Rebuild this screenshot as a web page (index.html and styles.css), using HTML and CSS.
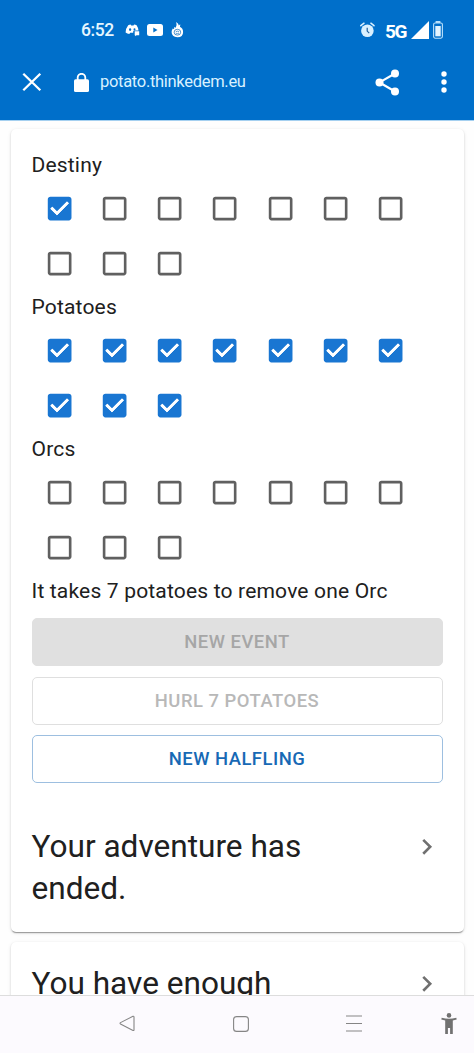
FILE: index.html
```html
<!DOCTYPE html>
<html lang="en">
<head>
<meta charset="utf-8">
<title>Potato</title>
<link rel="stylesheet" href="styles.css">
</head>
<body>
<svg width="0" height="0" class="defs">
  <symbol id="off" viewBox="0 0 24 24"><path fill="#606060" d="M19 5v14H5V5h14m0-2H5c-1.1 0-2 .9-2 2v14c0 1.1.9 2 2 2h14c1.1 0 2-.9 2-2V5c0-1.1-.9-2-2-2z"/></symbol>
  <symbol id="on" viewBox="0 0 24 24"><path fill="#1976d2" d="M19 3H5c-1.11 0-2 .9-2 2v14c0 1.1.89 2 2 2h14c1.11 0 2-.9 2-2V5c0-1.1-.89-2-2-2zm-9 14l-5-5 1.41-1.41L10 14.17l7.59-7.59L19 8l-9 9z"/><path fill="#fff" d="M10 17l-5-5 1.41-1.41L10 14.17l7.59-7.59L19 8z"/></symbol>
  <symbol id="chevron" viewBox="0 0 24 24"><path fill="#707070" d="M10 6L8.59 7.41 13.17 12l-4.58 4.59L10 18l6-6z"/></symbol>
</svg>
<div class="screen">
  <header class="top">
    <div class="status">
      <span class="clock">6:52</span>
      <svg class="discord" width="15" height="13" viewBox="0 0 15 13"><path fill="#fff" d="M3.2 1.2Q4.5.6 5.6.5l.6.9h2.3l.6-.9q1.3.1 2.5.7Q13.3 3.700 13.500 6.500H9.200q-1 0-1 1v1.200H5.200L4.300 10Q2.200 9.900.6 8.500.6 4.400 3.200 1.200z"/><ellipse cx="5.100" cy="5.600" rx="1.100" ry="1.300" fill="#006fca"/><ellipse cx="9.500" cy="5.400" rx="1" ry="1.100" fill="#006fca"/><path fill="#fff" d="M9.700 7.300h4.500v3.900h-2.700L10.200 12.300v-1.100h-.5z"/></svg>
      <svg class="youtube" width="16" height="12" viewBox="0 0 16 12"><rect width="16" height="12" rx="2.500" fill="#fff"/><path d="M6.300 3.500v5l4.200-2.500z" fill="#006fca"/></svg>
      <svg class="flame" width="13" height="16" viewBox="0 0 13 16"><path fill="#fff" d="M5.200 0Q7.800 1.700 7.800 3.600l1.400-1.400q.1 1.700-.3 2.600 3.200 1.500 3.200 5.100 0 5.300-5.700 5.300T.6 10.100q0-2 1.200-3.500l1.300.6.1-2.200 1.500.8Q6.200 3 5.200 0z"/><ellipse cx="6.400" cy="10.200" rx="3.300" ry="2.900" fill="none" stroke="#3a86c4" stroke-width=".9"/><path d="M4.800 9.800q1.600-1.300 3.200 0M4.800 11.200q1.600.9 3.200-.1" fill="none" stroke="#3a86c4" stroke-width=".8"/></svg>
      <svg class="alarm" width="15" height="16" viewBox="0 0 15 16"><circle cx="7.400" cy="8.800" r="6.300" fill="#d9f0ff"/><path d="M.8 3.700L4 1.200M10.900 1.200L14 3.700" stroke="#d9f0ff" stroke-width="1.500" stroke-linecap="round"/><path d="M7.200 5.800v3.300l2 2" fill="none" stroke="#20609e" stroke-width="1.200"/></svg>
      <span class="net">5G</span>
      <svg class="signal" width="18" height="18" viewBox="0 0 18 18"><path fill="#fff" d="M18 0v18H0z"/></svg>
      <svg class="battery" width="10" height="18" viewBox="0 0 10 18"><path fill="#b9e0fa" d="M2.600 0h4.800v2H2.600z"/><rect x=".6" y="2" width="8.800" height="15.200" rx="1.600" fill="none" stroke="#b9e0fa" stroke-width="1.100"/><path fill="#e4f4ff" d="M2.300 5h5.400v10.300H2.300z"/></svg>
    </div>
    <div class="bar">
      <svg class="close" width="20" height="20" viewBox="0 0 20 20"><path d="M1.300 1.700l17 16.600M18.300 1.700L1.300 18.300" stroke="#fff" stroke-width="2.300"/></svg>
      <svg class="lock" width="15" height="19" viewBox="0 0 15 19"><path fill="none" stroke="#fff" stroke-width="1.800" d="M3.700 7V4.600a3.700 3.700 0 017.600 0V7"/><rect y="6.300" width="15" height="12.700" rx="1.600" fill="#fff"/></svg>
      <span class="url">potato.thinkedem.eu</span>
      <svg class="share" width="25" height="27" viewBox="0 0 25 27"><path d="M20 4.500L4.500 13.400 20 22.500" fill="none" stroke="#fff" stroke-width="2.200"/><g fill="#fff"><circle cx="20" cy="4.500" r="4"/><circle cx="4.500" cy="13.400" r="4"/><circle cx="20" cy="22.500" r="4"/></g></svg>
      <svg class="more" width="6" height="22" viewBox="0 0 6 22"><g fill="#fff"><circle cx="3" cy="3" r="2.700"/><circle cx="3" cy="11" r="2.700"/><circle cx="3" cy="19" r="2.700"/></g></svg>
    </div>
  </header>
  <main class="page">
    <section class="card">
      <p class="label">Destiny</p>
      <div class="checks">
        <svg><use href="#on"/></svg><svg><use href="#off"/></svg><svg><use href="#off"/></svg><svg><use href="#off"/></svg><svg><use href="#off"/></svg><svg><use href="#off"/></svg><svg><use href="#off"/></svg><svg><use href="#off"/></svg><svg><use href="#off"/></svg><svg><use href="#off"/></svg>
      </div>
      <p class="label">Potatoes</p>
      <div class="checks">
        <svg><use href="#on"/></svg><svg><use href="#on"/></svg><svg><use href="#on"/></svg><svg><use href="#on"/></svg><svg><use href="#on"/></svg><svg><use href="#on"/></svg><svg><use href="#on"/></svg><svg><use href="#on"/></svg><svg><use href="#on"/></svg><svg><use href="#on"/></svg>
      </div>
      <p class="label">Orcs</p>
      <div class="checks">
        <svg><use href="#off"/></svg><svg><use href="#off"/></svg><svg><use href="#off"/></svg><svg><use href="#off"/></svg><svg><use href="#off"/></svg><svg><use href="#off"/></svg><svg><use href="#off"/></svg><svg><use href="#off"/></svg><svg><use href="#off"/></svg><svg><use href="#off"/></svg>
      </div>
      <p class="label">It takes 7 potatoes to remove one Orc</p>
      <div class="actions">
        <button class="btn filled" disabled>NEW EVENT</button>
        <button class="btn muted" disabled>HURL 7 POTATOES</button>
        <button class="btn primary">NEW HALFLING</button>
      </div>
      <div class="entry first"><h2>Your adventure has ended.</h2><svg class="chev"><use href="#chevron"/></svg></div>
    </section>
    <section class="card next">
      <div class="entry"><h2>You have enough</h2><svg class="chev"><use href="#chevron"/></svg></div>
    </section>
  </main>
  <nav class="nav">
    <svg class="back" width="16" height="17" viewBox="0 0 16 17"><path d="M14 1.300L1.500 7.600q-1 .7 0 1.400L14 15.500q1 .3 1-.8V2.100q0-1.100-1-.8z" fill="none" stroke="#858585" stroke-width="1.100"/></svg>
    <svg class="home" width="16" height="16" viewBox="0 0 16 16"><rect x=".6" y=".6" width="14.800" height="14.800" rx="3" fill="none" stroke="#858585" stroke-width="1.100"/></svg>
    <svg class="menu" width="16" height="17" viewBox="0 0 16 17"><path d="M0 1h16M0 8.500h16M0 16h16" stroke="#858585" stroke-width="1.200"/></svg>
    <svg class="person" width="16" height="21" viewBox="0 0 16 21"><circle cx="8" cy="2.400" r="2.300" fill="#717171"/><path fill="#717171" d="M.7 4.700Q8 7 15.300 4.700l.4 1.700-3.900 1.100V21H9.100v-6H6.900v6H4.200V7.500L.3 6.400z"/></svg>
  </nav>
</div>
</body>
</html>
```

FILE: styles.css
```css
* { box-sizing: border-box; }
body { margin: 0; background: #fff; font-family: Roboto, sans-serif; color: #202020; }
svg { display: block; flex: none; }
.defs { position: absolute; }
.screen { width: 474px; height: 1053px; display: flex; flex-direction: column; overflow: hidden; }
.top { height: 120px; flex: none; background: #006fca; color: #fff; }
.status { height: 60px; display: flex; align-items: center; padding-left: 81px; }
.clock { width: 44px; font-size: 17.500px; line-height: 20px; letter-spacing: -.4px; font-weight: 500; color: #e5f6ff; }
.youtube { margin-left: 7px; }
.flame { margin-left: 8px; }
.alarm { margin-left: 176px; }
.net { width: 26px; margin-left: 10px; padding-top: 4px; font: 700 19px/20px Roboto, sans-serif; letter-spacing: -1.300px; }
.net, .clock { white-space: nowrap; }
.signal { margin-left: 0; }
.battery { margin-left: 4px; }
.bar { height: 44px; display: flex; align-items: center; padding-left: 22px; }
.lock { margin-left: 32px; }
.url { width: 164px; margin-left: 11px; font-size: 16.500px; line-height: 24px; letter-spacing: -.3px; color: #d9f1ff; }
.share { margin-left: 111px; }
.more { margin-left: 41px; }
.page { flex: 1; min-height: 0; overflow: hidden; padding: 8px 10.500px 0; background: #fefefe; border-top: 1px solid #a5d0f0; }
.card { background: #fff; border-radius: 5px; padding: 20px 21px 21.300px; box-shadow: 0 2px 1px -1px rgba(0,0,0,.28), 0 1px 2px rgba(0,0,0,.16), 0 1px 4px rgba(0,0,0,.08); }
.next { margin-top: 10.500px; padding-top: 21.300px; }
.label { margin: 0; font-size: 21.050px; line-height: 31.580px; letter-spacing: .16px; }
.checks { display: flex; flex-wrap: wrap; position: relative; top: .4px; }
.checks svg { width: 55.270px; height: 55.270px; padding: 11.840px; }
.actions { display: flex; flex-direction: column; gap: 10.500px; padding-top: 11px; }
.btn { height: 48.200px; padding: 0; border: 1px solid; border-radius: 5px; background: none; font: 500 18.420px/30px Roboto, sans-serif; letter-spacing: .5px; }
.filled { background: #e0e0e0; border-color: #e0e0e0; color: #a6a6a6; }
.muted { border-color: #dfdfdf; color: #b8b8b8; }
.primary { border-color: #9dbfe0; color: #1769b5; }
.entry { display: flex; justify-content: space-between; align-items: flex-start; }
.first { margin-top: 42.600px; }
h2 { margin: 0; width: 320px; font-size: 31.580px; line-height: 42.120px; font-weight: 400; }
.chev { width: 31.600px; height: 31.600px; margin-top: 5px; }
.nav { height: 58px; flex: none; display: flex; align-items: center; padding: 0 0 2px 119px; background: #fcfafe; border-top: 1px solid #ddd; }
.home { margin-left: 98px; }
.menu { margin-left: 97px; }
.person { margin-left: 79px; }
```
